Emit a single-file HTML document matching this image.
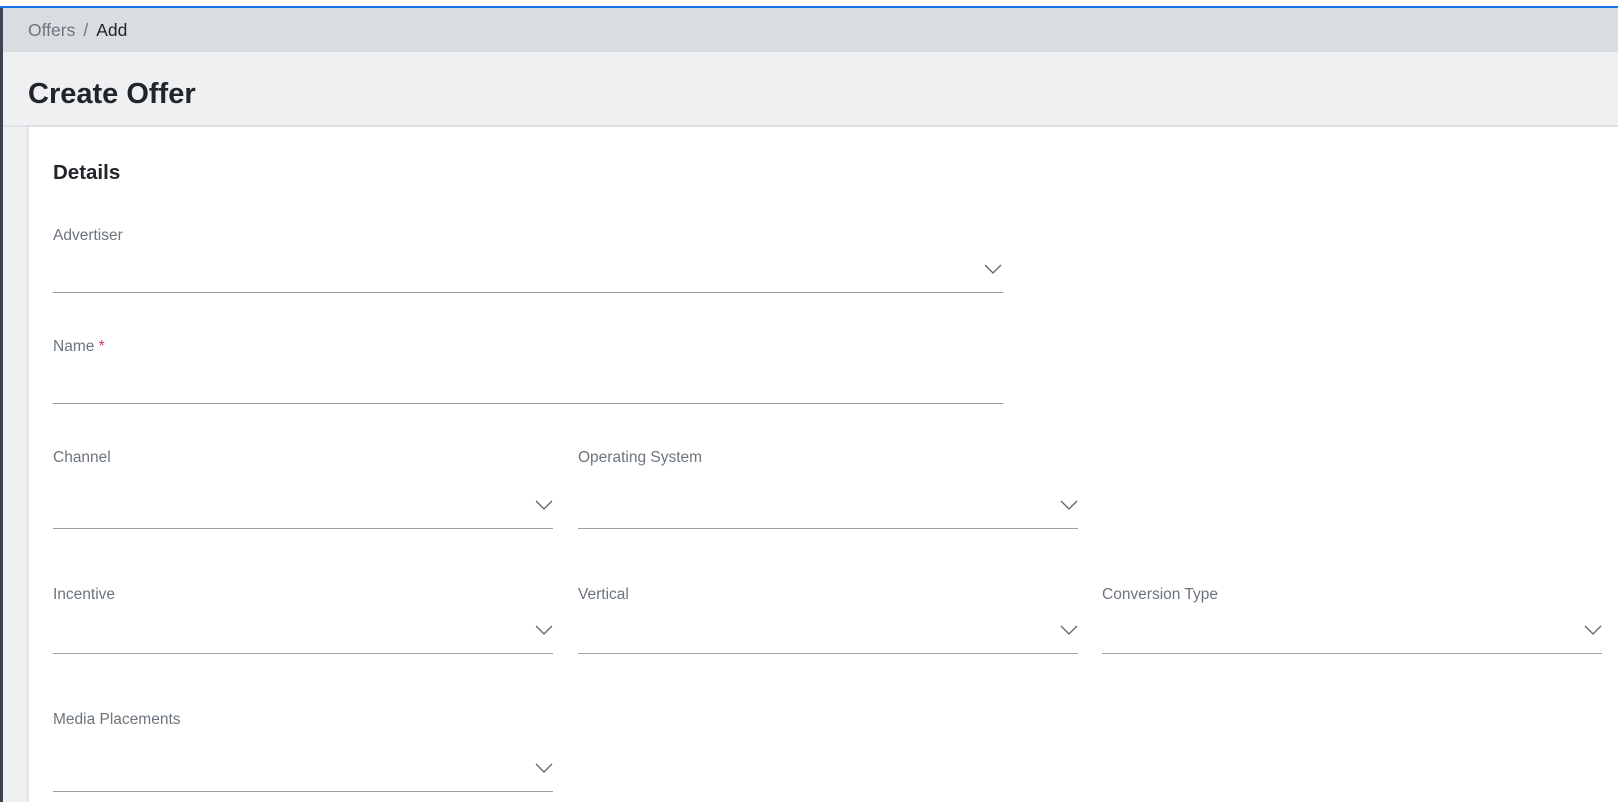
<!DOCTYPE html>
<html><head><style>
*{margin:0;padding:0;box-sizing:border-box}
body{width:1618px;height:802px;overflow:hidden;background:#fff;font-family:"Liberation Sans",Arial,sans-serif;position:relative}
.top{position:absolute;left:0;top:0;width:1618px;height:6px;background:#fff}
.blue{position:absolute;left:0;top:6px;width:1618px;height:2px;background:#1a73e8}
.side{position:absolute;left:0;top:8px;width:3px;height:794px;background:#3d4451}
.crumb{position:absolute;left:3px;top:8px;right:0;height:44px;background:#d9dde1;font-size:17.5px;line-height:44px;padding-left:25px;color:#212529}
.crumb .a{color:#6c757d}
.head{position:absolute;left:3px;top:52px;right:0;height:75px;background:#eef0f2;border-bottom:2px solid #e0e3e6}
.head h1{position:absolute;left:25px;top:26px;font-size:29px;font-weight:700;color:#212529}
.leftgap{position:absolute;left:3px;top:127px;width:25px;height:675px;background:#eef0f2}
.card{position:absolute;left:28px;top:127px;right:0;height:675px;background:#fff;border-left:1px solid #e3e6e9;box-shadow:-1px 0 2px rgba(0,0,0,.06)}
h2{position:absolute;left:53px;top:161px;font-size:20.5px;font-weight:700;color:#212529}
.lbl{position:absolute;font-size:15.5px;color:#6c757d}
.lbl b{color:#dc3545;font-weight:400}
.line{position:absolute;height:1px;background:#9aa0a6}
svg{position:absolute}
</style></head><body>
<div class="top"></div><div class="blue"></div><div class="side"></div>
<div class="crumb"><span class="a">Offers</span><span class="a" style="margin:0 8px">/</span>Add</div>
<div class="head"><h1>Create Offer</h1></div>
<div class="leftgap"></div>
<div class="card"></div>
<h2>Details</h2>

<div class="lbl" style="left:53px;top:227px">Advertiser</div>
<div class="line" style="left:53px;top:292px;width:950px"></div>
<svg style="left:984px;top:264px" width="18" height="10"><path d="M1 1L9 9L17 1" fill="none" stroke="#5f6368" stroke-width="1.3"/></svg>

<div class="lbl" style="left:53px;top:338px">Name <b>*</b></div>
<div class="line" style="left:53px;top:403px;width:950px"></div>

<div class="lbl" style="left:53px;top:449px">Channel</div>
<div class="line" style="left:53px;top:528px;width:500px"></div>
<svg style="left:535px;top:500px" width="18" height="10"><path d="M1 1L9 9L17 1" fill="none" stroke="#5f6368" stroke-width="1.3"/></svg>

<div class="lbl" style="left:578px;top:449px">Operating System</div>
<div class="line" style="left:578px;top:528px;width:500px"></div>
<svg style="left:1060px;top:500px" width="18" height="10"><path d="M1 1L9 9L17 1" fill="none" stroke="#5f6368" stroke-width="1.3"/></svg>

<div class="lbl" style="left:53px;top:586px">Incentive</div>
<div class="line" style="left:53px;top:653px;width:500px"></div>
<svg style="left:535px;top:625px" width="18" height="10"><path d="M1 1L9 9L17 1" fill="none" stroke="#5f6368" stroke-width="1.3"/></svg>

<div class="lbl" style="left:578px;top:586px">Vertical</div>
<div class="line" style="left:578px;top:653px;width:500px"></div>
<svg style="left:1060px;top:625px" width="18" height="10"><path d="M1 1L9 9L17 1" fill="none" stroke="#5f6368" stroke-width="1.3"/></svg>

<div class="lbl" style="left:1102px;top:586px">Conversion Type</div>
<div class="line" style="left:1102px;top:653px;width:500px"></div>
<svg style="left:1584px;top:625px" width="18" height="10"><path d="M1 1L9 9L17 1" fill="none" stroke="#5f6368" stroke-width="1.3"/></svg>

<div class="lbl" style="left:53px;top:711px">Media Placements</div>
<div class="line" style="left:53px;top:791px;width:500px"></div>
<svg style="left:535px;top:763px" width="18" height="10"><path d="M1 1L9 9L17 1" fill="none" stroke="#5f6368" stroke-width="1.3"/></svg>
</body></html>
